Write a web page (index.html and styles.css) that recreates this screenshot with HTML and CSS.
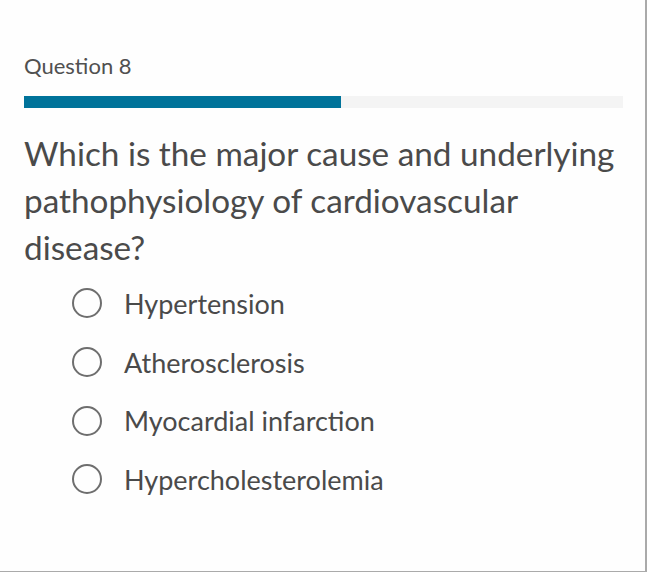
FILE: index.html
```html
<!DOCTYPE html>
<html>
<head>
<meta charset="utf-8">
<link rel="stylesheet" href="styles.css">
</head>
<body>
<div class="frame">
  <div class="content">
    <div class="qnum">Question 8</div>
    <div class="progress"><div class="fill" style="width:53%"></div></div>
    <div class="qtext">Which is the major cause and underlying pathophysiology of cardiovascular disease?</div>
    <ul class="options">
      <li class="option"><span class="radio"></span><span class="label">Hypertension</span></li>
      <li class="option"><span class="radio"></span><span class="label">Atherosclerosis</span></li>
      <li class="option"><span class="radio"></span><span class="label">Myocardial infarction</span></li>
      <li class="option"><span class="radio"></span><span class="label">Hypercholesterolemia</span></li>
    </ul>
  </div>
</div>
</body>
</html>
```
FILE: styles.css
```css
html, body {
  margin: 0;
  padding: 0;
  background: #fff;
}
body {
  font-family: "Lato", "Open Sans", sans-serif;
  color: #505050;
}
.frame {
  width: 645px;
  height: 571px;
  border-right: 2px solid #aaaaaa;
  border-bottom: 1px solid #aaaaaa;
  background: #fefefe;
  box-sizing: content-box;
}
.content {
  padding: 50px 24px 0 24px;
  width: 599px;
}
.qnum {
  font-size: 22px;
  line-height: 32px;
  height: 32px;
}
.progress {
  margin-top: 14px;
  height: 12px;
  background: #f4f4f4;
}
.fill {
  height: 100%;
  background: #00739a;
}
.qtext {
  margin-top: 22px;
  font-size: 33.3px;
  line-height: 47px;
  color: #4a4a4a;
}
.options {
  list-style: none;
  margin: 3px 0 0 0;
  padding: 0 0 0 48px;
}
.option {
  display: flex;
  align-items: center;
  height: 58.7px;
}
.radio {
  width: 26px;
  height: 26px;
  border: 2.5px solid #6e6e6e;
  border-radius: 50%;
  flex: none;
}
.label {
  margin-left: 22px;
  font-size: 27px;
  color: #4a4a4a;
}
```
